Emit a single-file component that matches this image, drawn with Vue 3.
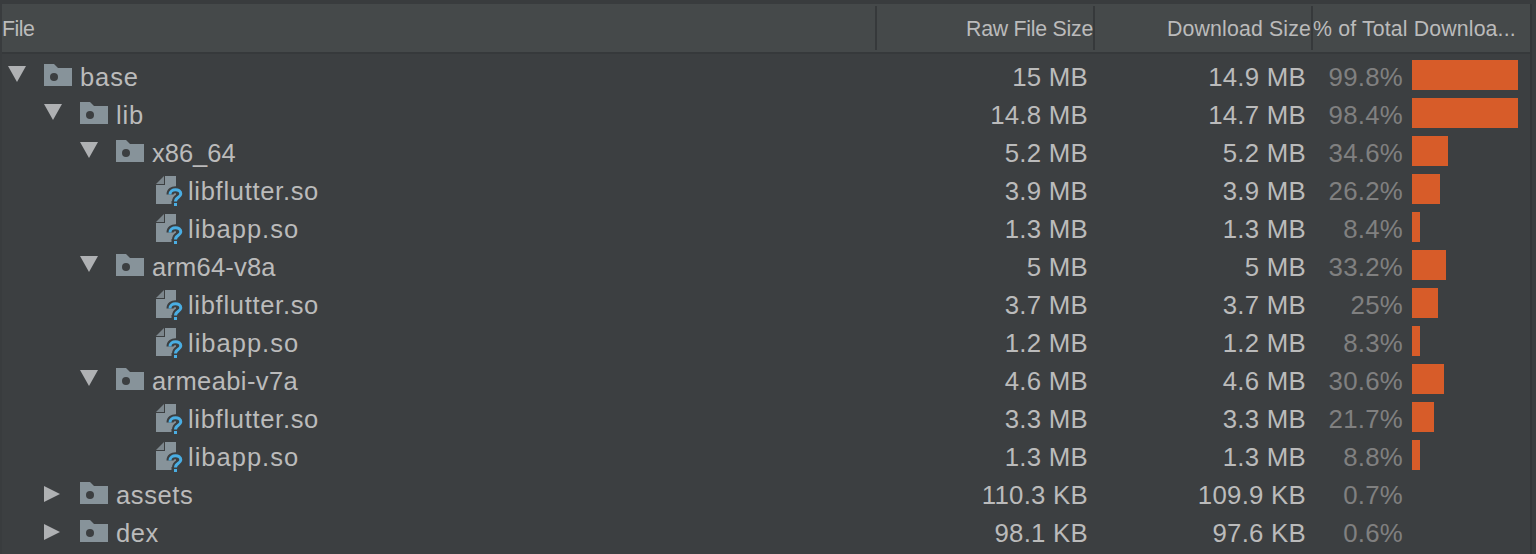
<template>
  <div class="table">
    <div class="head">
      <div class="hcell file-h">File</div>
      <div class="hcell num-h raw-h">Raw File Size</div>
      <div class="hcell num-h dl-h">Download Size</div>
      <div class="hcell pct-h">% of Total Downloa...</div>
    </div>
    <div class="row" v-for="row in rows" :key="row.id">
      <div class="name" :style="{ paddingLeft: row.depth * 36 + 8 + 'px' }">
        <span class="arrow">
          <svg v-if="row.open === true" class="down" width="18" height="16" viewBox="0 0 18 16"><path d="M0 0H18L9 16Z" fill="#afb1b3" /></svg>
          <svg v-else-if="row.open === false" class="right" width="16" height="16" viewBox="0 0 16 16"><path d="M0 0L16 8L0 16Z" fill="#afb1b3" /></svg>
        </span>
        <svg v-if="row.open !== undefined" class="folder" width="28" height="22" viewBox="0 0 28 22">
          <path d="M0 0H10L14 4H28V22H0Z" fill="#87939a" />
          <circle cx="10" cy="13" r="4" fill="#3c3f41" />
        </svg>
        <svg v-else class="so" width="28" height="34" viewBox="0 0 28 34">
          <path d="M9 4H20V32H0V13H9Z" fill="#87939a" />
          <path d="M0 12L8 4V12Z" fill="#7c868c" />
          <path d="M14 22.5C14 16 25 16.5 24.8 22C24.6 25.5 19.5 25 19.5 29.5" fill="none" stroke="#3c3f41" stroke-width="7" />
          <rect x="15.5" y="29" width="8" height="7" fill="#3c3f41" />
          <path d="M14 22.5C14 16 25 16.5 24.8 22C24.6 25.5 19.5 25 19.5 29.5" fill="none" stroke="#4aaee3" stroke-width="3" />
          <rect x="18" y="31" width="3" height="3" fill="#4aaee3" />
        </svg>
        <span class="label" :style="{ letterSpacing: row.ls + 'px' }">{{ row.name }}</span>
      </div>
      <div class="num">{{ row.raw }}</div>
      <div class="num">{{ row.dl }}</div>
      <div class="pct">{{ row.pct }}</div>
      <div class="bar-cell">
        <div class="bar" v-if="row.bar" :style="{ width: row.bar + 'px' }"></div>
      </div>
    </div>
  </div>
</template>

<script setup>
const rows = [
  { id: 1, depth: 0, open: true, name: 'base', ls: 0.9, raw: '15 MB', dl: '14.9 MB', pct: '99.8%', bar: 106 },
  { id: 2, depth: 1, open: true, name: 'lib', ls: 0.8, raw: '14.8 MB', dl: '14.7 MB', pct: '98.4%', bar: 106 },
  { id: 3, depth: 2, open: true, name: 'x86_64', ls: 0, raw: '5.2 MB', dl: '5.2 MB', pct: '34.6%', bar: 36 },
  { id: 4, depth: 3, name: 'libflutter.so', ls: 0.7, raw: '3.9 MB', dl: '3.9 MB', pct: '26.2%', bar: 28 },
  { id: 5, depth: 3, name: 'libapp.so', ls: 1, raw: '1.3 MB', dl: '1.3 MB', pct: '8.4%', bar: 8 },
  { id: 6, depth: 2, open: true, name: 'arm64-v8a', ls: 0.2, raw: '5 MB', dl: '5 MB', pct: '33.2%', bar: 34 },
  { id: 7, depth: 3, name: 'libflutter.so', ls: 0.7, raw: '3.7 MB', dl: '3.7 MB', pct: '25%', bar: 26 },
  { id: 8, depth: 3, name: 'libapp.so', ls: 1, raw: '1.2 MB', dl: '1.2 MB', pct: '8.3%', bar: 8 },
  { id: 9, depth: 2, open: true, name: 'armeabi-v7a', ls: 0.4, raw: '4.6 MB', dl: '4.6 MB', pct: '30.6%', bar: 32 },
  { id: 10, depth: 3, name: 'libflutter.so', ls: 0.7, raw: '3.3 MB', dl: '3.3 MB', pct: '21.7%', bar: 22 },
  { id: 11, depth: 3, name: 'libapp.so', ls: 1, raw: '1.3 MB', dl: '1.3 MB', pct: '8.8%', bar: 8 },
  { id: 12, depth: 1, open: false, name: 'assets', ls: 0.6, raw: '110.3 KB', dl: '109.9 KB', pct: '0.7%', bar: 0 },
  { id: 13, depth: 1, open: false, name: 'dex', ls: 0.6, raw: '98.1 KB', dl: '97.6 KB', pct: '0.6%', bar: 0 },
]
</script>

<style>
html, body { background: #3c3f41; overflow: hidden; }
</style>

<style scoped>
.table { width: 1536px; height: 554px; overflow: hidden; background: #3c3f41; font-family: "Liberation Sans", sans-serif; box-sizing: border-box; padding-top: 4px; box-shadow: inset 2px 4px 0 #393c3e, inset -4px 0 0 #3a3d3f, inset -6px 0 0 #333638; }
.head { display: grid; grid-template-columns: 875px 218px 218px 205px; height: 48px; margin-left: 2px; width: 1528px; background: #45494a; border-bottom: 2px solid #36393b; color: #bbbbbb; font-size: 21.3px; margin-bottom: 2px; grid-template-rows: 48px; box-sizing: content-box; }
.hcell { display: flex; align-items: center; white-space: nowrap; border-right: 2px solid #36393b; margin: 2px 0; padding-top: 2px; }
.file-h { margin-left: -2px; padding-left: 2px; width: 873px; letter-spacing: -0.5px; }
.num-h { justify-content: flex-end; }
.raw-h { letter-spacing: -0.25px; }
.dl-h { letter-spacing: 0.15px; }
.pct-h { border-right: none; letter-spacing: 0.15px; }
.row { display: grid; grid-template-columns: 875px 218px 218px 101px 124px; grid-template-rows: 38px; height: 38px; align-items: center; color: #bbbbbb; font-size: 25.8px; white-space: nowrap; }
.name { display: flex; align-items: center; height: 38px; }
.arrow { width: 36px; display: flex; align-items: center; height: 38px; }
.down { margin-top: -2px; }
.right { margin-top: 2px; }
.folder { margin-right: 8px; }
.so { margin-left: 4px; margin-right: 4px; }
.label { font-size: 25.5px; line-height: 32px; padding-top: 4px; }
.num { text-align: right; padding: 4px 5px 0 0; letter-spacing: 0.25px; }
.pct { text-align: right; padding: 4px 9px 0 0; color: #808080; letter-spacing: 0.25px; }
.bar { height: 30px; background: #d75c29; }
</style>
